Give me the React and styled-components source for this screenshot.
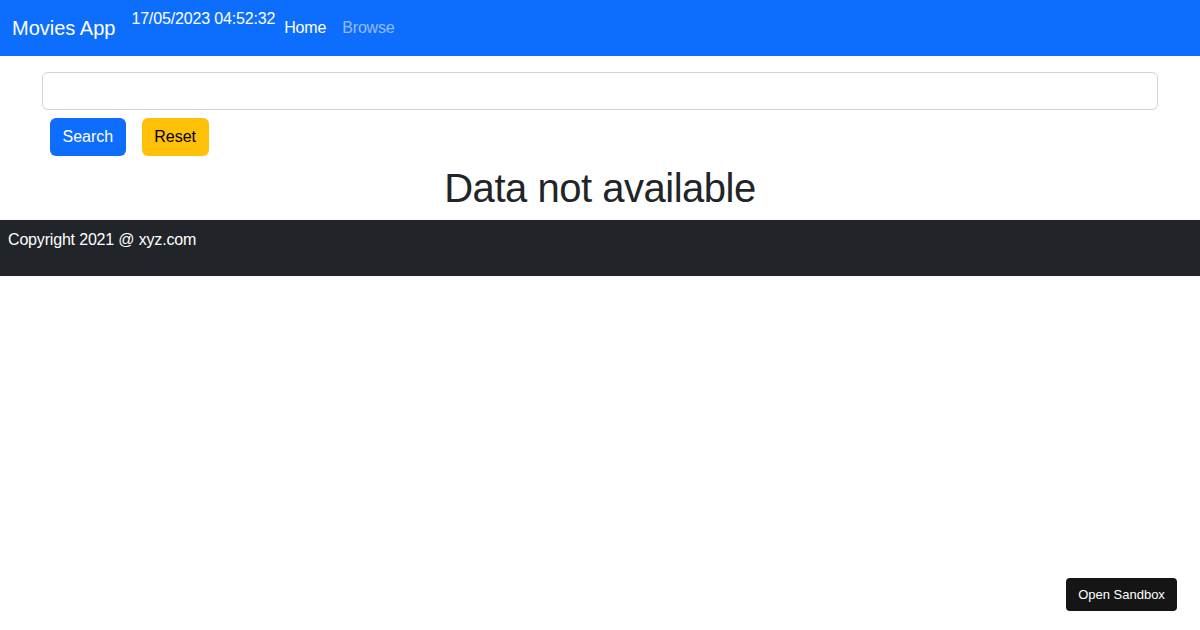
import React from "react";
import styled, { createGlobalStyle } from "styled-components";

const GlobalStyle = createGlobalStyle`
    * {
        box-sizing: border-box;
    }
    body {
        margin: 0;
        font-family: "Liberation Sans", Arial, sans-serif;
        font-size: 16px;
        line-height: 1.5;
        color: #212529;
        background: #fff;
    }
`;

const Navbar = styled.nav`
    display: flex;
    align-items: center;
    height: 56px;
    padding: 0 12px;
    background: #0d6efd;
`;

const Brand = styled.a`
    font-size: 20px;
    line-height: 30px;
    padding: 5px 0;
    margin-right: 16px;
    color: #fff;
    text-decoration: none;
`;

const Clock = styled.span`
    align-self: flex-start;
    margin-top: 7px;
    margin-right: 1px;
    color: #fff;
    line-height: 24px;
    letter-spacing: -0.01em;
`;

const NavLinks = styled.div`
    display: flex;
`;

const NavLink = styled.a`
    padding: 8px;
    color: ${({ $active }) => ($active ? "#fff" : "rgba(255, 255, 255, 0.55)")};
    text-decoration: none;
    letter-spacing: -0.01em;
`;

const SearchForm = styled.form`
    padding: 16px 42px 0;
`;

const SearchInput = styled.input`
    display: block;
    width: 100%;
    height: 38px;
    padding: 6px 12px;
    font: inherit;
    border: 1px solid #ced4da;
    border-radius: 6px;
    outline: none;
`;

const ButtonRow = styled.div`
    display: flex;
    gap: 16px;
    margin-top: 8px;
    padding-left: 8px;
`;

const Button = styled.button`
    height: 38px;
    padding: 6px 12.5px;
    font: inherit;
    border: none;
    border-radius: 6px;
    background: ${({ $variant }) => ($variant === "warning" ? "#ffc107" : "#0d6efd")};
    color: ${({ $variant }) => ($variant === "warning" ? "#000" : "#fff")};
`;

const Message = styled.h1`
    margin: 8px 0;
    font-size: 40px;
    font-weight: 400;
    line-height: 48px;
    letter-spacing: -0.012em;
    text-align: center;
`;

const Footer = styled.footer`
    height: 56px;
    padding: 8px 8px 0;
    background: #212529;
    color: #fff;
    letter-spacing: -0.011em;
`;

const SandboxButton = styled.a`
    position: fixed;
    right: 23px;
    bottom: 19px;
    display: flex;
    align-items: center;
    justify-content: center;
    width: 111px;
    height: 33px;
    border-radius: 4px;
    background: #151515;
    color: #fff;
    font-size: 13px;
    text-decoration: none;
`;

function App() {
    return (
        <>
            <GlobalStyle />
            <Navbar>
                <Brand href="#">Movies App</Brand>
                <Clock>17/05/2023 04:52:32</Clock>
                <NavLinks>
                    <NavLink $active href="#">Home</NavLink>
                    <NavLink href="#">Browse</NavLink>
                </NavLinks>
            </Navbar>
            <SearchForm onSubmit={(e) => e.preventDefault()}>
                <SearchInput type="text" />
                <ButtonRow>
                    <Button type="submit">Search</Button>
                    <Button type="button" $variant="warning">Reset</Button>
                </ButtonRow>
            </SearchForm>
            <Message>Data not available</Message>
            <Footer>Copyright 2021 @ xyz.com</Footer>
            <SandboxButton href="#">Open Sandbox</SandboxButton>
        </>
    );
}

export default App;
